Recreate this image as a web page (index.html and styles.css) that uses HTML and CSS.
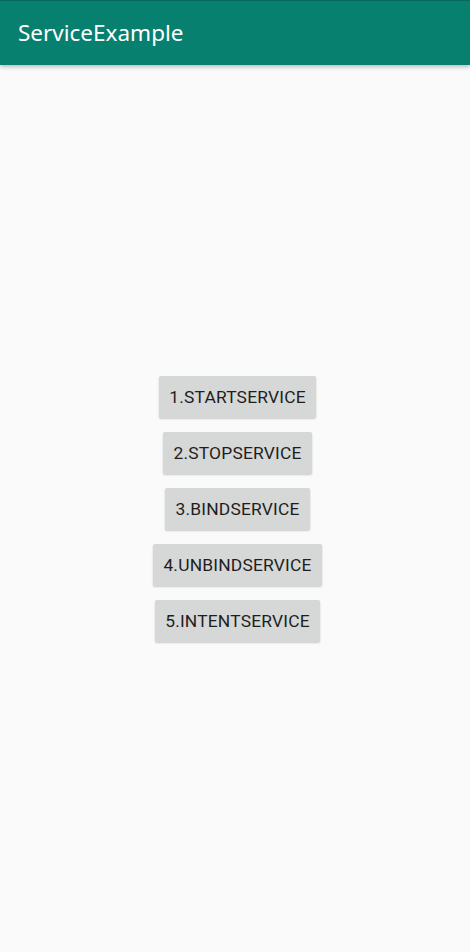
FILE: index.html
```html
<!DOCTYPE html>
<html lang="en">
<head>
  <meta charset="UTF-8" />
  <meta name="viewport" content="width=device-width, initial-scale=1.0"/>
  <title>ServiceExample</title>
  <link rel="stylesheet" href="styles.css">
</head>
<body>
  <header class="toolbar">
    <h1>ServiceExample</h1>
  </header>

  <main class="content">
    <button class="btn">1.STARTSERVICE</button>
    <button class="btn">2.STOPSERVICE</button>
    <button class="btn">3.BINDSERVICE</button>
    <button class="btn">4.UNBINDSERVICE</button>
    <button class="btn">5.INTENTSERVICE</button>
  </main>
</body>
</html>
```

FILE: styles.css
```css
* {
  margin: 0;
  padding: 0;
  box-sizing: border-box;
}
html, body {
  height: 100%;
  width: 100%;
  overflow: hidden;
}
body {
  font-family: 'Noto Sans', 'Open Sans', sans-serif;
  background: #fafafa;
  display: flex;
  flex-direction: column;
}
.toolbar {
  height: 65px;
  flex-shrink: 0;
  background: #07806f;
  border-top: 1px solid #056a5c;
  display: flex;
  align-items: center;
  padding-left: 18px;
  box-shadow: 0 2px 4px rgba(0,0,0,0.25);
  position: relative;
  z-index: 1;
}
.toolbar h1 {
  color: #fff;
  font-size: 22.5px;
  font-weight: 400;
  margin-top: -1px;
}
.content {
  flex: 1;
  display: flex;
  flex-direction: column;
  align-items: center;
  justify-content: center;
  gap: 14px;
  padding-left: 5px;
}
.btn {
  height: 42px;
  padding: 0 10px;
  border: none;
  border-radius: 2px;
  background: #d6d7d7;
  color: #1e1e1e;
  font-family: Roboto, 'Noto Sans', sans-serif;
  font-size: 17.4px;
  letter-spacing: 0.2px;
  box-shadow: 0 1px 2px rgba(0,0,0,0.2);
  cursor: pointer;
}
```
